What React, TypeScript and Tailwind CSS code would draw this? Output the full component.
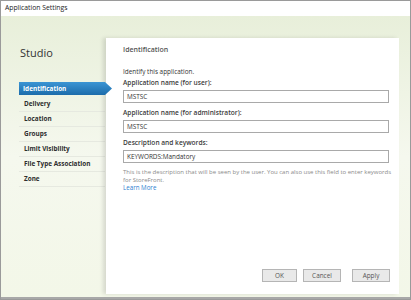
import React from 'react';

const NAV = [
  'Identification',
  'Delivery',
  'Location',
  'Groups',
  'Limit Visibility',
  'File Type Association',
  'Zone',
];

function Field({ label, value }: { label: string; value: string }) {
  return (
    <div className="flex flex-col">
      <div className="text-[6.6px] font-semibold text-[#3b3b3b] leading-[9px] mb-[3px]">{label}</div>
      <div className="h-[13px] w-[266px] border border-[#a9a9a9] bg-white px-[3px] flex items-center text-[6.4px] text-[#333]">
        {value}
      </div>
    </div>
  );
}

export default function App() {
  return (
    <div
      className="w-[411px] h-[300px] border border-[#9a9a9a] flex flex-col overflow-hidden bg-white"
      style={{ fontFamily: '"Open Sans", "Noto Sans", sans-serif' }}
    >
      {/* Title bar */}
      <div className="h-[15px] shrink-0 bg-white flex items-center px-[4px] text-[6.8px] text-[#222]">
        Application Settings
      </div>

      {/* Body */}
      <div className="flex-1 flex bg-gradient-to-b from-[#e8efda] via-[#f5f8ee] to-[#f3f7e8] border-b-[2px] border-[#a8a8a8]">
        {/* Left nav */}
        <div className="w-[105px] shrink-0 pt-[30px] pl-[18px] flex flex-col">
          <div className="text-[11px] text-[#333] leading-[14px] mb-[22px] pl-[1px]">Studio</div>
          <div className="flex flex-col">
            {NAV.map((item, i) =>
              i === 0 ? (
                <div key={item} className="relative h-[13px] mb-[2px]">
                  <div className="h-full w-[86px] bg-gradient-to-b from-[#3b95d4] to-[#1c6cab] flex items-center pl-[4px] text-[6.4px] font-bold text-white">
                    {item}
                  </div>
                  <svg className="absolute left-[86px] top-0" width="7" height="13" viewBox="0 0 7 13">
                    <defs>
                      <linearGradient id="tip" x1="0" y1="0" x2="0" y2="1">
                        <stop offset="0" stopColor="#3b95d4" />
                        <stop offset="1" stopColor="#1c6cab" />
                      </linearGradient>
                    </defs>
                    <path d="M0 0 L7 6.5 L0 13 Z" fill="url(#tip)" />
                  </svg>
                </div>
              ) : (
                <div
                  key={item}
                  className="h-[15px] w-[86px] border-b border-[#e6e9e0] flex items-center pl-[5px] text-[6.4px] font-bold text-[#2e2e2e]"
                >
                  {item}
                </div>
              ),
            )}
          </div>
        </div>

        {/* Right panel */}
        <div className="flex-1 min-w-0 mt-[22px] mb-[3px] mr-[11px] bg-white shadow-[-3px_0_4px_rgba(0,0,0,0.12)] flex flex-col pl-[17px] pt-[7px] pr-[9px] pb-[12px]">
          <div className="text-[7px] font-semibold text-[#555] leading-[10px]">Identification</div>
          <div className="text-[6.4px] text-[#333] leading-[9px] mt-[12px] mb-[2px]">Identify this application.</div>
          <div className="flex flex-col gap-[5px]">
            <Field label="Application name (for user):" value="MSTSC" />
            <Field label="Application name (for administrator):" value="MSTSC" />
            <Field label="Description and keywords:" value="KEYWORDS:Mandatory" />
          </div>
          <div className="text-[6px] text-[#8a8a8a] leading-[8px] mt-[5px] w-[274px]">
            This is the description that will be seen by the user. You can also use this field to enter keywords for StoreFront.
          </div>
          <div className="text-[6.2px] text-[#2f7fd0] leading-[8px]">Learn More</div>

          <div className="mt-auto flex justify-end gap-[6px]">
            <button className="w-[35px] h-[13px] border border-[#b5b5b5] bg-[#e9e9e9] text-[6.4px] text-[#555]">OK</button>
            <button className="w-[38px] h-[13px] border border-[#b5b5b5] bg-[#e9e9e9] text-[6.4px] text-[#555] mr-[5px]">Cancel</button>
            <button className="w-[38px] h-[13px] border border-[#b5b5b5] bg-[#e9e9e9] text-[6.4px] text-[#555]">Apply</button>
          </div>
        </div>
      </div>
    </div>
  );
}
